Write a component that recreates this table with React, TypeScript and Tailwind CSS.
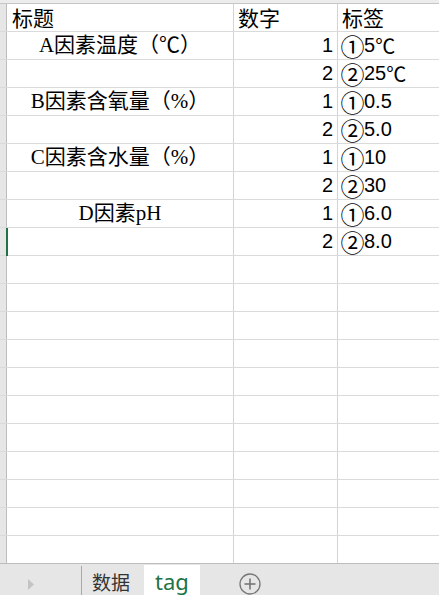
import React from "react";

const rows: { a: string; b: string; c: string; c1: string; deg?: boolean }[] = [
  { a: "A因素温度（℃）", b: "1", c1: "①", c: "5", deg: true },
  { a: "", b: "2", c1: "②", c: "25", deg: true },
  { a: "B因素含氧量（%）", b: "1", c1: "①", c: "0.5" },
  { a: "", b: "2", c1: "②", c: "5.0" },
  { a: "C因素含水量（%）", b: "1", c1: "①", c: "10" },
  { a: "", b: "2", c1: "②", c: "30" },
  { a: "D因素pH", b: "1", c1: "①", c: "6.0" },
  { a: "", b: "2", c1: "②", c: "8.0" },
];

const sans = "font-['Liberation_Sans','Noto_Sans_CJK_SC',sans-serif]";
const serif = "font-['Liberation_Serif','Noto_Sans_CJK_SC',serif]";
const cjk = "font-['Noto_Sans_CJK_SC',sans-serif]";

export default function App() {
  const all = [...rows];
  while (all.length < 19) all.push({ a: "", b: "", c: "", c1: "" });
  return (
    <div className={`w-[439px] h-[595px] bg-white flex flex-col overflow-hidden text-black ${sans}`}>
      <div className="h-[4px] shrink-0 bg-[#ececec] border-b border-[#c6c6c6]" />
      {/* header row */}
      <div className="h-[28px] shrink-0 flex border-b border-[#dadada]">
        <div className="w-[7px] shrink-0 bg-[#e6e6e6] border-r border-[#bdbdbd]" />
        <div className={`w-[227px] shrink-0 border-r border-[#d4d4d4] pl-[5px] text-[21px] leading-[27px] ${cjk}`}>标题</div>
        <div className={`w-[104px] shrink-0 border-r border-[#d4d4d4] pl-[4px] text-[21px] leading-[27px] ${cjk}`}>数字</div>
        <div className={`flex-1 pl-[4px] text-[21px] leading-[27px] ${cjk}`}>标签</div>
      </div>
      {all.map((r, i) => (
        <div key={i} className={`relative h-[28px] shrink-0 flex border-b ${i === 18 ? "border-[#bdbdbd]" : "border-[#dadada]"}`}>
          <div className="w-[7px] shrink-0 bg-[#e6e6e6] border-r border-[#bdbdbd]" />
          {i === 7 && <div className="absolute left-[6px] top-0 w-[2px] h-[28px] bg-[#217346]" />}
          <div className={`w-[227px] shrink-0 border-r border-[#d4d4d4] text-center text-[21px] leading-[27px] whitespace-nowrap ${serif}`}>
            {r.a}
          </div>
          <div className="w-[104px] shrink-0 border-r border-[#d4d4d4] text-right pr-[4px] text-[20px] leading-[27px]">
            {r.b}
          </div>
          <div className="flex-1 pl-[3px] h-[27px] flex items-center text-[20px] leading-[27px] whitespace-nowrap">
            {r.c1 && (
              <span className={`${cjk} inline-flex justify-center w-[23px] h-[24px] items-center text-[24px] leading-[24px] text-black`}>
                {r.c1}
              </span>
            )}
            <span>{r.c}</span>
            {r.deg && <span className={`${cjk} text-[20px] leading-[27px]`}>℃</span>}
          </div>
        </div>
      ))}
      {/* tab bar */}
      <div className="flex-1 bg-[#e6e6e6] flex items-stretch relative">
        <div className="w-[81px] shrink-0 flex items-center justify-start pl-[28px]">
          <svg width="7" height="11" viewBox="0 0 7 11">
            <polygon points="0,0 6,5.5 0,11" fill="#c4c4c4" />
          </svg>
        </div>
        <div className="w-[1px] bg-[#a8a8a8] mt-[2px]" />
        <div className="w-[62px] shrink-0 flex items-center pl-[10px] text-[19px] text-[#333]">数据</div>
        <div className="w-[56px] shrink-0 mt-[1px] bg-white border-b-[3px] border-[#217346] flex items-center justify-center text-[22px] text-[#217346] pb-[3px] font-['Noto_Sans',sans-serif]">
          tag
        </div>
        <div className="flex items-center pl-[39px]">
          <svg width="22" height="22" viewBox="0 0 22 22">
            <circle cx="11" cy="11" r="10" fill="none" stroke="#767676" strokeWidth="1.3" />
            <line x1="11" y1="5.5" x2="11" y2="16.5" stroke="#767676" strokeWidth="1.6" />
            <line x1="5.5" y1="11" x2="16.5" y2="11" stroke="#767676" strokeWidth="1.6" />
          </svg>
        </div>
      </div>
    </div>
  );
}
